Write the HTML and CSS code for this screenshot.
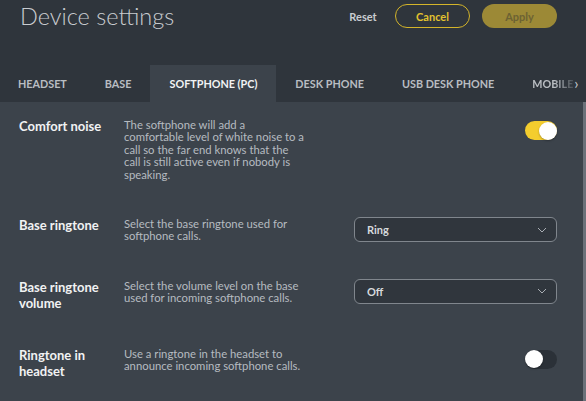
FILE: index.html
```html
<!DOCTYPE html>
<html>
<head>
<meta charset="utf-8">
<link rel="stylesheet" href="styles.css">
</head>
<body>
<div class="app">
  <header class="header">
    <h1 class="title">Device settings</h1>
    <div class="actions">
      <button class="btn-reset">Reset</button>
      <button class="btn-cancel">Cancel</button>
      <button class="btn-apply">Apply</button>
    </div>
  </header>
  <nav class="tabs">
    <div class="tab">HEADSET</div>
    <div class="tab">BASE</div>
    <div class="tab active">SOFTPHONE (PC)</div>
    <div class="tab">DESK PHONE</div>
    <div class="tab">USB DESK PHONE</div>
    <div class="tab last"><span class="fade">MOBILE</span><span class="more">›</span></div>
  </nav>
  <div class="content">
    <div class="rows">
      <div class="row">
        <div class="label">Comfort noise</div>
        <div class="desc">The softphone will add a comfortable level of white noise to a call so the far end knows that the call is still active even if nobody is speaking.</div>
        <div class="control"><div class="toggle on"><div class="knob"></div></div></div>
      </div>
      <div class="row">
        <div class="label">Base ringtone</div>
        <div class="desc">Select the base ringtone used for softphone calls.</div>
        <div class="control"><div class="select"><span>Ring</span><svg class="chev" width="10" height="6" viewBox="0 0 10 6"><path d="M1 1 L5 5 L9 1" fill="none" stroke="#a9aeb4" stroke-width="1"/></svg></div></div>
      </div>
      <div class="row">
        <div class="label">Base ringtone volume</div>
        <div class="desc">Select the volume level on the base used for incoming softphone calls.</div>
        <div class="control"><div class="select"><span>Off</span><svg class="chev" width="10" height="6" viewBox="0 0 10 6"><path d="M1 1 L5 5 L9 1" fill="none" stroke="#a9aeb4" stroke-width="1"/></svg></div></div>
      </div>
      <div class="row">
        <div class="label">Ringtone in headset</div>
        <div class="desc">Use a ringtone in the headset to announce incoming softphone calls.</div>
        <div class="control"><div class="toggle off"><div class="knob"></div></div></div>
      </div>
    </div>
    <div class="scrollbar"></div>
  </div>
</div>
</body>
</html>
```
FILE: styles.css
```css
* { box-sizing: border-box; }
html, body { margin: 0; padding: 0; }
body {
  width: 586px;
  height: 401px;
  overflow: hidden;
  background: #2f353c;
  font-family: "Lato", "Noto Sans", sans-serif;
}
.app {
  width: 586px;
  height: 401px;
  display: flex;
  flex-direction: column;
  background: #2f353c;
}
.header {
  display: flex;
  align-items: center;
  justify-content: space-between;
  height: 32px;
  padding: 0 29px 0 20px;
}
.title {
  margin: 0;
  font-size: 23.5px;
  font-weight: 300;
  color: #c9ccd0;
  line-height: 31px;
}
.actions {
  display: flex;
  align-items: center;
}
.actions button {
  font-family: inherit;
  font-size: 11px;
  font-weight: 700;
  height: 24px;
  border-radius: 12px;
  cursor: pointer;
  padding: 0;
}
.btn-reset {
  background: none;
  border: none;
  color: #c9ccd0;
  width: 30px;
  margin-right: 17px;
}
.btn-cancel {
  width: 75px;
  background: transparent;
  border: 1.5px solid #d3b42a;
  color: #e2c22f;
  margin-right: 12px;
}
.btn-apply {
  width: 75px;
  background: #9c8936;
  border: none;
  color: #6c6233;
}
.tabs {
  display: flex;
  margin-top: 33px;
  height: 37px;
  overflow: hidden;
}
.tab {
  display: flex;
  align-items: center;
  padding: 0 19px;
  font-size: 10.8px;
  font-weight: 700;
  color: #b9bdc2;
  white-space: nowrap;
}
.tab:first-child { padding-left: 18px; }
.tab.active {
  background: #3c434b;
  color: #f2f3f4;
}
.tab.last {
  padding-right: 0;
}
.fade {
  -webkit-mask-image: linear-gradient(to right, #000 55%, rgba(0,0,0,0.2) 100%);
  mask-image: linear-gradient(to right, #000 55%, rgba(0,0,0,0.2) 100%);
}
.more {
  font-size: 15px;
  font-weight: 400;
  color: #c9ccd0;
  margin-left: 1px;
  margin-top: -2px;
}
.content {
  flex: 1;
  display: flex;
  background: #3c434b;
}
.rows {
  flex: 1;
  display: flex;
  flex-direction: column;
  gap: 36px;
  padding: 16px 26px 0 19px;
}
.row {
  display: flex;
  align-items: flex-start;
}
.label {
  width: 105px;
  font-size: 13px;
  font-weight: 700;
  line-height: 16px;
  color: #f1f2f3;
  padding-right: 10px;
}
.desc {
  width: 180px;
  font-size: 11.3px;
  line-height: 12.4px;
  color: #b6bbc0;
  margin-top: 1px;
}
.control {
  flex: 1;
  display: flex;
  justify-content: flex-end;
}
.toggle {
  width: 32px;
  height: 19px;
  border-radius: 10px;
  position: relative;
  margin-top: 3px;
}
.toggle.on { background: #f4cd2e; }
.toggle.off { background: #2b3138; }
.knob {
  position: absolute;
  top: 0.5px;
  width: 18px;
  height: 18px;
  border-radius: 50%;
  background: #ffffff;
  box-shadow: 0 1px 2px rgba(0,0,0,0.3);
}
.toggle.on .knob { right: 0; }
.toggle.off .knob { left: 0; }
.select {
  width: 203px;
  height: 25px;
  border: 1px solid #80868d;
  border-radius: 6px;
  background: #30363d;
  display: flex;
  align-items: center;
  justify-content: space-between;
  padding: 0 9px 0 12px;
  font-size: 11px;
  font-weight: 700;
  color: #d7dadd;
}
.scrollbar {
  width: 3px;
  background: #6b7179;
}
```
